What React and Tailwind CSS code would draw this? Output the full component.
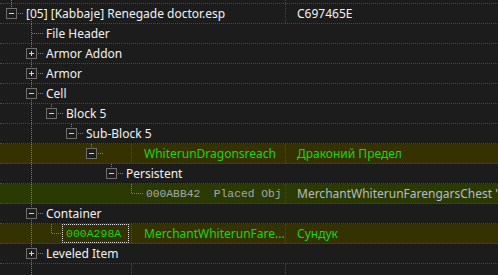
import React from 'react';

const GREEN = 'text-[#1fd40c]';

const rows = [
  { lvl: 0, box: 'minus', label: '[05] [Kabbaje] Renegade doctor.esp', name: 'C697465E' },
  { lvl: 1, label: 'File Header' },
  { lvl: 1, box: 'plus', label: 'Armor Addon' },
  { lvl: 1, box: 'plus', label: 'Armor' },
  { lvl: 1, box: 'minus', label: 'Cell' },
  { lvl: 2, box: 'minus', label: 'Block 5' },
  { lvl: 3, box: 'minus', label: 'Sub-Block 5' },
  {
    lvl: 4,
    box: 'minus',
    record: true,
    edid: 'WhiterunDragonsreach',
    name: 'Драконий Предел',
    bg: 'bg-[#353200]',
    color: GREEN,
  },
  { lvl: 5, box: 'minus', label: 'Persistent' },
  {
    lvl: 6,
    mono: true,
    label: '000ABB42  Placed Obj',
    name: 'MerchantWhiterunFarengarsChest "Сундук"',
    bg: 'bg-[#2b3a02]',
    color: 'text-[#a3a8ac]',
    nameColor: 'text-[#b6bcc2]',
  },
  { lvl: 1, box: 'minus', label: 'Container' },
  {
    lvl: 2,
    record: true,
    formid: '000A298A',
    edid: 'MerchantWhiterunFare...',
    name: 'Сундук',
    bg: 'bg-[#343200]',
    color: GREEN,
  },
  { lvl: 1, box: 'plus', label: 'Leveled Item' },
];

// dotted tree guides + expand buttons for one row
const TreeLines = ({ row, first }) => {
  const { lvl, box } = row;
  const cx = 11 + 20 * lvl;
  const lines = [];
  const dot = { stroke: '#7c7c7c', strokeWidth: 1, strokeDasharray: '1 1', shapeRendering: 'crispEdges' };

  // level-1 trunk runs through everything below the plugin node
  if (lvl >= 1) lines.push([31.5, 0, 31.5, 20]);
  if (first) lines.push([31.5, 15, 31.5, 20]);

  if (lvl !== 1) lines.push([cx + 0.5, 0, cx + 0.5, box ? 4 : 10]);

  if (!row.tail) {
    const textX = row.mono ? 143 : row.formid ? 61 : 24 + 20 * lvl;
    const hStart = box ? cx + 7 : cx + 1;
    const hEnd = row.record && !row.formid ? cx + 13 : textX;
    lines.push([hStart, 9.5, hEnd, 9.5]);
  }

  return (
    <svg width="285" height="20" className="absolute left-0 top-0 pointer-events-none">
      {lines.map(([x1, y1, x2, y2], i) => (
        <line key={i} x1={x1} y1={y1} x2={x2} y2={y2} {...dot} />
      ))}
      {box && (
        <g>
          <rect x={cx - 4.5} y={4.5} width="10" height="10" fill="#1e1e1e" stroke="#6e6e6e" />
          <line x1={cx - 2} y1={9.5} x2={cx + 3} y2={9.5} stroke="#d8d8d8" />
          {box === 'plus' && <line x1={cx + 0.5} y1={7} x2={cx + 0.5} y2={12} stroke="#d8d8d8" />}
        </g>
      )}
    </svg>
  );
};

const Row = ({ row, first }) => {
  const sep = 'border-r border-dotted border-[#474747]';
  return (
    <div className={`relative flex h-5 border-b border-dotted border-[#474747] ${row.bg || ''}`}>
      <TreeLines row={row} first={first} />
      {row.record ? (
        <>
          <div className={`w-[132px] shrink-0 flex items-center ${sep}`}>
            {row.formid && (
              <span
                className={`ml-[62px] h-[19px] w-[67px] flex items-center pl-[3px] border border-dotted border-[#e8e8e8] font-['Liberation_Mono',monospace] text-[11.5px] ${row.color}`}
              >
                {row.formid}
              </span>
            )}
          </div>
          <div className={`w-[154px] shrink-0 flex items-center pl-[12px] overflow-hidden whitespace-nowrap ${sep} ${row.color}`}>
            {row.edid}
          </div>
          <div className={`flex-1 flex items-center pl-[11px] whitespace-nowrap overflow-hidden ${row.color}`}>
            {row.name}
          </div>
        </>
      ) : (
        <>
          <div
            className={`w-[286px] shrink-0 flex items-center whitespace-pre overflow-hidden ${row.name ? sep : ''} ${row.color || 'text-[#f2f2f2]'}`}
            style={{ paddingLeft: row.mono ? 146 : 26 + 20 * row.lvl }}
          >
            {row.mono ? (
              <span className="font-['Liberation_Mono',monospace] text-[11.3px] whitespace-pre">{row.label}</span>
            ) : (
              row.label
            )}
          </div>
          <div className={`flex-1 flex items-center pl-[11px] whitespace-nowrap overflow-hidden ${row.nameColor || 'text-[#f2f2f2]'}`}>
            {row.name}
          </div>
        </>
      )}
    </div>
  );
};

export default function App() {
  return (
    <div className="w-[498px] h-[275px] overflow-hidden bg-[#1c1c1c] font-['Noto_Sans',sans-serif] text-[12px] leading-5">
      {/* tail of the previous row */}
      <div className="relative h-[4px] border-b border-dotted border-[#474747] flex">
        <div className="w-[286px] border-r border-dotted border-[#474747]" />
        <svg width="20" height="4" className="absolute left-0 top-0">
          <line x1="11.5" y1="0" x2="11.5" y2="4" stroke="#7c7c7c" strokeDasharray="1 1" />
        </svg>
      </div>
      {rows.map((row, i) => (
        <Row key={i} row={row} first={i === 0} />
      ))}
      <Row row={{ lvl: 1, record: true, tail: true, edid: '', name: '' }} />
    </div>
  );
}
